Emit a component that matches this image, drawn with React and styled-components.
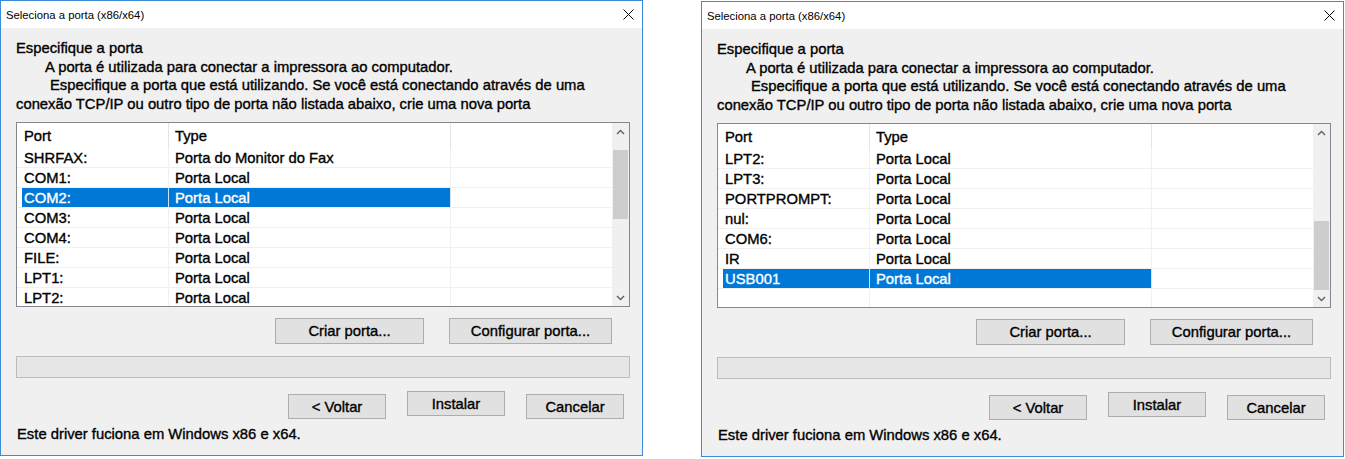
import React from "react";
import styled, { createGlobalStyle } from "styled-components";

const GlobalStyle = createGlobalStyle`
  html, body {
    margin: 0;
    padding: 0;
    background: #fff;
  }
  body {
    font-family: "Liberation Sans", Arial, sans-serif;
    color: #000;
  }
`;

const Page = styled.div`
  display: flex;
  align-items: flex-start;
  gap: 58px;
  width: 1345px;
  height: 459px;
  overflow: hidden;
`;

const Window = styled.div`
  width: 643px;
  height: 456px;
  box-sizing: border-box;
  margin-top: ${(p) => p.$offset || 0}px;
  border: 1px solid #3b8bd6;
  background: #f0f0f0;
  display: flex;
  flex-direction: column;
`;

const TitleBar = styled.div`
  height: 27px;
  flex-shrink: 0;
  background: #fff;
  display: flex;
  align-items: center;
  justify-content: space-between;
  padding: 0 8px 0 5px;
  font-size: 11.3px;
`;

const Body = styled.div`
  flex: 1;
  display: flex;
  flex-direction: column;
  padding: 11px 12px 0 15px;
  font-size: 14.8px;
  -webkit-text-stroke: 0.35px currentColor;
`;

const Intro = styled.div`
  line-height: 18.5px;
`;

const Line = styled.div`
  padding-left: ${(p) => p.$indent || 0}px;
  white-space: nowrap;
`;

const ListBox = styled.div`
  margin-top: 9px;
  height: 185px;
  box-sizing: border-box;
  border: 1px solid #828790;
  background: #fff;
  display: flex;
  overflow: hidden;
`;

const ListArea = styled.div`
  flex: 1;
  overflow: hidden;
`;

const cols = "5px 147px 282px 1fr";

const HeaderRow = styled.div`
  display: grid;
  grid-template-columns: ${cols};
  height: 25px;
`;

const HeadCell = styled.div`
  display: flex;
  align-items: center;
  padding-left: ${(p) => p.$pad}px;
  border-right: ${(p) => (p.$last ? "none" : "1px solid #e5e5e5")};
`;

const Row = styled.div`
  display: grid;
  grid-template-columns: ${cols};
  height: 20px;
  box-sizing: border-box;
  border-bottom: 1px solid #f0f0f0;
`;

const Cell = styled.div`
  display: flex;
  align-items: center;
  padding-left: ${(p) => p.$pad}px;
  white-space: nowrap;
  background: ${(p) => (p.$sel ? "#0078d7" : "transparent")};
  color: ${(p) => (p.$sel ? "#fff" : "#000")};
  border-right: 1px solid ${(p) => (p.$sel ? "#cfe3f5" : p.$last ? "transparent" : "#f0f0f0")};
`;

const ScrollBar = styled.div`
  width: 17px;
  flex-shrink: 0;
  background: #f0f0f0;
  display: flex;
  flex-direction: column;
`;

const ScrollBtn = styled.div`
  height: 17px;
  display: flex;
  align-items: center;
  justify-content: center;
`;

const Track = styled.div`
  flex: 1;
  display: flex;
  flex-direction: column;
  align-items: center;
`;

const Thumb = styled.div`
  width: 15px;
  height: 69px;
  background: #cdcdcd;
`;

const ButtonRow = styled.div`
  display: flex;
  justify-content: flex-end;
  align-items: flex-start;
  gap: ${(p) => p.$gap}px;
  margin-top: ${(p) => p.$top}px;
  padding-right: ${(p) => p.$right}px;
`;

const Button = styled.button`
  width: ${(p) => p.$w}px;
  height: ${(p) => p.$h || 25}px;
  margin-top: ${(p) => p.$lift || 0}px;
  box-sizing: border-box;
  background: #e1e1e1;
  border: 1px solid #adadad;
  border-radius: 0;
  padding: 0;
  font-family: inherit;
  font-size: 14.8px;
  color: #000;
  -webkit-text-stroke: 0.35px currentColor;
`;

const Progress = styled.div`
  margin-top: 12px;
  height: 22px;
  box-sizing: border-box;
  background: #e6e6e6;
  border: 1px solid #bcbcbc;
`;

const Footer = styled.div`
  margin-top: 6px;
  line-height: 18px;
  padding-left: 1px;
`;

const CloseIcon = () => (
  <svg width="11" height="11" viewBox="0 0 11 11">
    <path d="M0.5 0.5 L10.5 10.5 M10.5 0.5 L0.5 10.5" stroke="#000" strokeWidth="1" fill="none" />
  </svg>
);

const Chevron = ({ down }) => (
  <svg width="9" height="6" viewBox="0 0 9 6">
    <path
      d={down ? "M1 1 L4.5 4.5 L8 1" : "M1 5 L4.5 1.5 L8 5"}
      stroke="#606060"
      strokeWidth="1.4"
      fill="none"
    />
  </svg>
);

const PortDialog = ({ rows, thumbTop, offset }) => (
  <Window $offset={offset}>
    <TitleBar>
      <span>Seleciona a porta (x86/x64)</span>
      <CloseIcon />
    </TitleBar>
    <Body>
      <Intro>
        <Line>Especifique a porta</Line>
        <Line $indent={29}>A porta é utilizada para conectar a impressora ao computador.</Line>
        <Line $indent={34}>
          Especifique a porta que está utilizando. Se você está conectando através de uma
        </Line>
        <Line>conexão TCP/IP ou outro tipo de porta não listada abaixo, crie uma nova porta</Line>
      </Intro>

      <ListBox>
        <ListArea>
          <HeaderRow>
            <span />
            <HeadCell $pad={2}>Port</HeadCell>
            <HeadCell $pad={6}>Type</HeadCell>
            <HeadCell $last />
          </HeaderRow>
          {rows.map((r, i) => (
            <Row key={i}>
              <span />
              <Cell $pad={2} $sel={r.sel}>{r.port}</Cell>
              <Cell $pad={6} $sel={r.sel}>{r.type}</Cell>
              <Cell $last />
            </Row>
          ))}
        </ListArea>
        <ScrollBar>
          <ScrollBtn>
            <Chevron />
          </ScrollBtn>
          <Track>
            <Thumb style={{ marginTop: thumbTop }} />
          </Track>
          <ScrollBtn>
            <Chevron down />
          </ScrollBtn>
        </ScrollBar>
      </ListBox>

      <ButtonRow $gap={25} $top={11} $right={18}>
        <Button $w={149} $h={26}>Criar porta...</Button>
        <Button $w={163} $h={26}>Configurar porta...</Button>
      </ButtonRow>

      <Progress />

      <ButtonRow $gap={21} $top={13} $right={6}>
        <Button $w={98} $lift={3}>&lt; Voltar</Button>
        <Button $w={98}>Instalar</Button>
        <Button $w={98} $lift={3}>Cancelar</Button>
      </ButtonRow>

      <Footer>Este driver fuciona em Windows x86 e x64.</Footer>
    </Body>
  </Window>
);

const leftRows = [
  { port: "SHRFAX:", type: "Porta do Monitor do Fax" },
  { port: "COM1:", type: "Porta Local" },
  { port: "COM2:", type: "Porta Local", sel: true },
  { port: "COM3:", type: "Porta Local" },
  { port: "COM4:", type: "Porta Local" },
  { port: "FILE:", type: "Porta Local" },
  { port: "LPT1:", type: "Porta Local" },
  { port: "LPT2:", type: "Porta Local" },
];

const rightRows = [
  { port: "LPT2:", type: "Porta Local" },
  { port: "LPT3:", type: "Porta Local" },
  { port: "PORTPROMPT:", type: "Porta Local" },
  { port: "nul:", type: "Porta Local" },
  { port: "COM6:", type: "Porta Local" },
  { port: "IR", type: "Porta Local" },
  { port: "USB001", type: "Porta Local", sel: true },
  { port: "", type: "" },
];

export default function App() {
  return (
    <>
      <GlobalStyle />
      <Page>
        <PortDialog rows={leftRows} thumbTop={10} offset={0} />
        <PortDialog rows={rightRows} thumbTop={80} offset={1} />
      </Page>
    </>
  );
}
